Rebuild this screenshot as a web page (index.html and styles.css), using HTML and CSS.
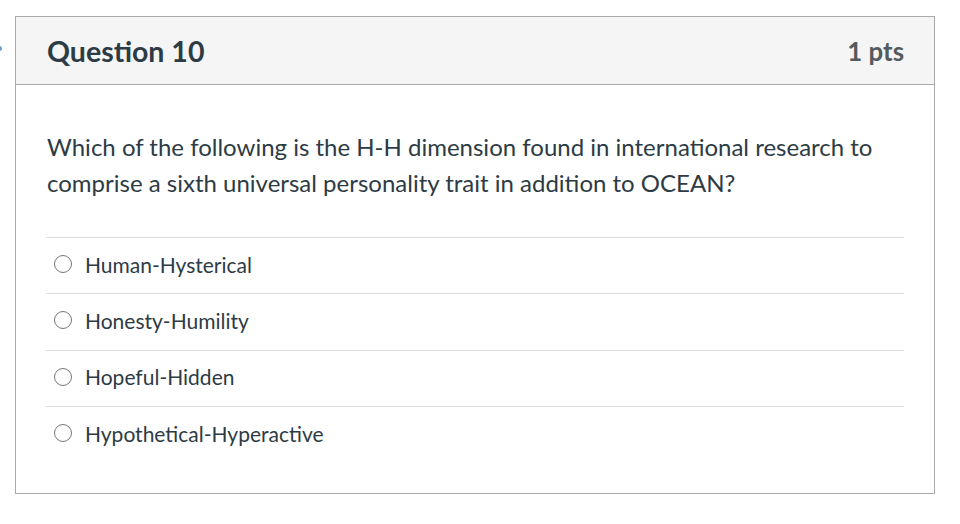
FILE: index.html
```html
<!DOCTYPE html>
<html>
<head>
<meta charset="utf-8">
<link rel="stylesheet" href="styles.css">
</head>
<body>
<span class="edge-dot"></span>
<div class="question">
  <div class="q-header">
    <h2 class="q-title">Question 10</h2>
    <span class="q-points">1 pts</span>
  </div>
  <div class="q-body">
    <p class="q-text">Which of the following is the H-H dimension found in international research to comprise a sixth universal personality trait in addition to OCEAN?</p>
    <div class="answers">
      <label class="answer"><span class="radio"></span><span class="answer-label">Human-Hysterical</span></label>
      <label class="answer"><span class="radio"></span><span class="answer-label">Honesty-Humility</span></label>
      <label class="answer"><span class="radio"></span><span class="answer-label">Hopeful-Hidden</span></label>
      <label class="answer"><span class="radio"></span><span class="answer-label">Hypothetical-Hyperactive</span></label>
    </div>
  </div>
</div>
</body>
</html>
```
FILE: styles.css
```css
html, body {
  margin: 0;
  padding: 0;
  background: #fff;
}
body {
  font-family: Lato, "Liberation Sans", sans-serif;
  color: #2d3b45;
  padding: 16px 25px 0 15px;
  position: relative;
}
.edge-dot {
  position: absolute;
  left: -3px;
  top: 46px;
  width: 5px;
  height: 5px;
  border-radius: 50%;
  background: #6a9ccc;
}
.question {
  border: 1px solid #aaaaaa;
  height: 478px;
  box-sizing: border-box;
}
.q-header {
  display: flex;
  justify-content: space-between;
  align-items: center;
  height: 67px;
  padding: 0 30px 0 31px;
  background: #f5f5f5;
  border-bottom: 1px solid #aaaaaa;
}
.q-title {
  margin: 0;
  font-size: 28.5px;
  font-weight: 700;
  color: #2d3b45;
}
.q-points {
  font-size: 25.8px;
  font-weight: 700;
  color: #555a5e;
}
.q-body {
  padding: 44px 30px 0 30px;
}
.q-text {
  margin: 0 0 36px 1px;
  font-size: 24px;
  line-height: 36px;
}
.answers {
  display: flex;
  flex-direction: column;
}
.answer {
  display: flex;
  align-items: center;
  box-sizing: border-box;
  height: 56.3px;
  border-top: 1px solid #dddddd;
  padding: 0 0 3px 8px;
}
.radio {
  box-sizing: border-box;
  width: 18px;
  height: 18px;
  border: 1.5px solid #777;
  border-radius: 50%;
  margin-right: 13px;
}
.answer-label {
  font-size: 21px;
}
```
